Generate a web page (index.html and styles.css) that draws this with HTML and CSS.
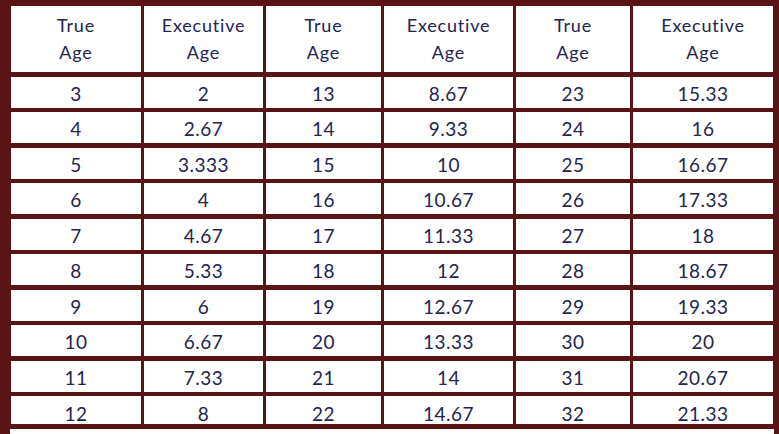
FILE: index.html
```html
<!DOCTYPE html>
<html>
<head>
<meta charset="utf-8">
<link rel="stylesheet" href="styles.css">
</head>
<body>
<div class="table">
  <div class="cell head">True<br>Age</div>
  <div class="cell head">Executive<br>Age</div>
  <div class="cell head">True<br>Age</div>
  <div class="cell head">Executive<br>Age</div>
  <div class="cell head">True<br>Age</div>
  <div class="cell head">Executive<br>Age</div>

  <div class="cell">3</div><div class="cell">2</div><div class="cell">13</div><div class="cell">8.67</div><div class="cell">23</div><div class="cell">15.33</div>
  <div class="cell">4</div><div class="cell">2.67</div><div class="cell">14</div><div class="cell">9.33</div><div class="cell">24</div><div class="cell">16</div>
  <div class="cell">5</div><div class="cell">3.333</div><div class="cell">15</div><div class="cell">10</div><div class="cell">25</div><div class="cell">16.67</div>
  <div class="cell">6</div><div class="cell">4</div><div class="cell">16</div><div class="cell">10.67</div><div class="cell">26</div><div class="cell">17.33</div>
  <div class="cell">7</div><div class="cell">4.67</div><div class="cell">17</div><div class="cell">11.33</div><div class="cell">27</div><div class="cell">18</div>
  <div class="cell">8</div><div class="cell">5.33</div><div class="cell">18</div><div class="cell">12</div><div class="cell">28</div><div class="cell">18.67</div>
  <div class="cell">9</div><div class="cell">6</div><div class="cell">19</div><div class="cell">12.67</div><div class="cell">29</div><div class="cell">19.33</div>
  <div class="cell">10</div><div class="cell">6.67</div><div class="cell">20</div><div class="cell">13.33</div><div class="cell">30</div><div class="cell">20</div>
  <div class="cell">11</div><div class="cell">7.33</div><div class="cell">21</div><div class="cell">14</div><div class="cell">31</div><div class="cell">20.67</div>
  <div class="cell last">12</div><div class="cell last">8</div><div class="cell last">22</div><div class="cell last">14.67</div><div class="cell last">32</div><div class="cell last">21.33</div>
  <div class="cell tail"></div>
</div>
</body>
</html>
```
FILE: styles.css
```css
html, body {
  margin: 0;
  padding: 0;
  background: #5a1416;
  height: 434px;
  overflow: hidden;
}
.table {
  display: grid;
  grid-template-columns: 130px 119px 115px 129px 114px 140px;
  grid-template-rows: 66px repeat(9, 31px) 28px 10px;
  column-gap: 3px;
  row-gap: 4.5px;
  padding: 6px 6px 0 11px;
  font-family: "Lato", "DejaVu Sans", sans-serif;
  font-weight: 400;
  color: #23244f;
}
.cell {
  background: #ffffff;
  display: flex;
  align-items: center;
  justify-content: center;
  text-align: center;
  font-size: 19px;
  letter-spacing: 0.5px;
  overflow: hidden;
  padding-top: 2px;
  box-sizing: border-box;
}
.head {
  line-height: 27px;
  font-size: 18px;
  padding-top: 0;
  letter-spacing: 0.8px;
}
.last {
  align-items: flex-start;
  padding-top: 7px;
  line-height: 22px;
}
.tail {
  grid-column: 1 / -1;
  margin-left: -1px;
  margin-right: -1px;
}
```
